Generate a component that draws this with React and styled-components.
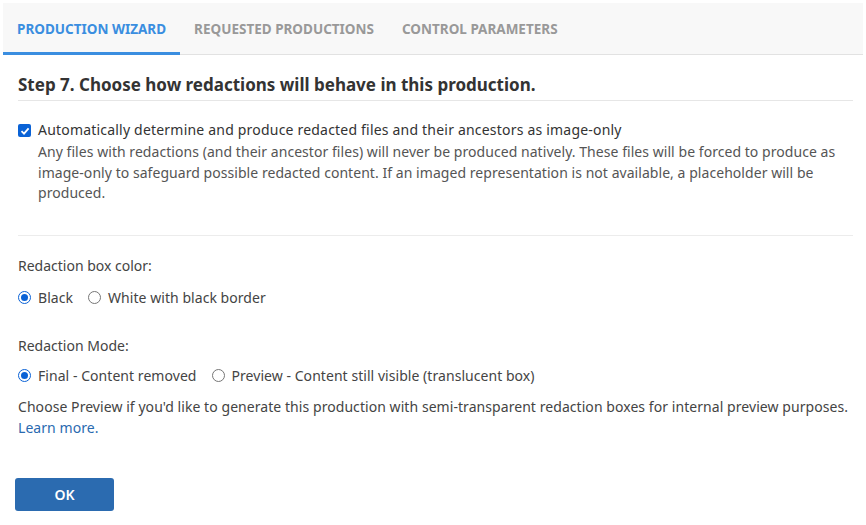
import React, { useState } from "react";
import styled, { createGlobalStyle } from "styled-components";

const GlobalStyle = createGlobalStyle`
    html, body {
        margin: 0;
        padding: 0;
        background: #ffffff;
    }
    body {
        font-family: "Noto Sans", "Open Sans", sans-serif;
        color: #333333;
    }
    * {
        box-sizing: border-box;
    }
`;

const StyledPage = styled.div`
    width: 866px;
    padding: 3px 3px 0 3px;
`;

const StyledTabBar = styled.div`
    display: flex;
    flex-direction: row;
    height: 52px;
    background-color: #f8f8f8;
    border-bottom: solid 1px #e2e2e2;
`;

const StyledTab = styled.div`
    display: flex;
    align-items: center;
    padding: 3px 14px 0 14px;
    margin-bottom: -1px;
    font-size: 13.5px;
    font-weight: 700;
    text-transform: uppercase;
    color: ${(props) => (props.active ? "#3a8ee0" : "#999999")};
    border-bottom: solid 3px ${(props) => (props.active ? "#3a8ee0" : "transparent")};
`;

const StyledBody = styled.div`
    display: flex;
    flex-direction: column;
    padding: 0 10px 0 15px;
`;

const StyledHeading = styled.h2`
    margin: 18px 0 0 0;
    padding-bottom: 4px;
    font-size: 17px;
    font-weight: 700;
    color: #333333;
    border-bottom: solid 1px #e6e6e6;
`;

const StyledCheckRow = styled.label`
    display: flex;
    flex-direction: row;
    align-items: flex-start;
    gap: 7px;
    margin-top: 19px;
`;

const StyledCheckbox = styled.span`
    flex-shrink: 0;
    width: 13px;
    height: 13px;
    margin-top: 4px;
    border-radius: 2px;
    background-color: #0a62d6;
    display: flex;
    align-items: center;
    justify-content: center;
`;

const StyledCheckText = styled.div`
    display: flex;
    flex-direction: column;
`;

const StyledOptionTitle = styled.div`
    font-size: 14px;
    line-height: 20px;
    letter-spacing: 0.2px;
    color: #333333;
    margin-bottom: 2px;
`;

const StyledDescription = styled.div`
    font-size: 14px;
    line-height: 20.5px;
    letter-spacing: 0.05px;
    color: #555555;
`;

const StyledDivider = styled.div`
    height: 1px;
    background-color: #ececec;
    margin: ${(props) => props.margin || "0"};
`;

const StyledLabel = styled.div`
    font-size: 14px;
    line-height: 20px;
    color: #444444;
    margin-top: ${(props) => props.top || "0"};
`;

const StyledRadioGroup = styled.div`
    display: flex;
    flex-direction: row;
    gap: 15px;
    margin-top: ${(props) => props.top || "11px"};
`;

const StyledRadioLabel = styled.label`
    display: flex;
    flex-direction: row;
    align-items: center;
    gap: 7px;
    font-size: 14px;
    line-height: 20px;
    letter-spacing: 0.05px;
    color: #444444;
    cursor: pointer;
`;

const StyledRadio = styled.span`
    width: 13px;
    height: 13px;
    border-radius: 50%;
    border: solid 1px ${(props) => (props.checked ? "#0a62d6" : "#767676")};
    display: flex;
    align-items: center;
    justify-content: center;
    &::after {
        content: "";
        width: 7px;
        height: 7px;
        border-radius: 50%;
        background-color: ${(props) => (props.checked ? "#0a62d6" : "transparent")};
    }
`;

const StyledHint = styled.div`
    font-size: 14px;
    line-height: 21.5px;
    letter-spacing: 0.06px;
    color: #444444;
    margin-top: 10px;
`;

const StyledLink = styled.a`
    color: #2a6ab0;
    text-decoration: none;
`;

const StyledButton = styled.button`
    width: 99px;
    height: 33px;
    margin: 39px 0 0 -3px;
    border: none;
    border-radius: 3px;
    background-color: #2b6bb0;
    color: #ffffff;
    font-family: inherit;
    font-size: 14px;
    font-weight: 600;
    cursor: pointer;
`;

const Radio = ({ checked, label, onSelect }) => (
    <StyledRadioLabel onClick={onSelect}>
        <StyledRadio checked={checked} />
        {label}
    </StyledRadioLabel>
);

const tabs = ["Production Wizard", "Requested Productions", "Control Parameters"];

const App = () => {
    const [boxColor, setBoxColor] = useState("black");
    const [mode, setMode] = useState("final");

    return (
        <StyledPage>
            <GlobalStyle />
            <StyledTabBar>
                {tabs.map((tab, i) => (
                    <StyledTab key={tab} active={i === 0}>
                        {tab}
                    </StyledTab>
                ))}
            </StyledTabBar>
            <StyledBody>
                <StyledHeading>Step 7. Choose how redactions will behave in this production.</StyledHeading>
                <StyledCheckRow>
                    <StyledCheckbox>
                        <svg width="10" height="10" viewBox="0 0 10 10">
                            <path d="M1.5 5.2 L4 7.6 L8.6 2.4" fill="none" stroke="#fff" strokeWidth="1.8" />
                        </svg>
                    </StyledCheckbox>
                    <StyledCheckText>
                        <StyledOptionTitle>
                            Automatically determine and produce redacted files and their ancestors as image-only
                        </StyledOptionTitle>
                        <StyledDescription>
                            Any files with redactions (and their ancestor files) will never be produced natively. These
                            files will be forced to produce as image-only to safeguard possible redacted content. If an
                            imaged representation is not available, a placeholder will be produced.
                        </StyledDescription>
                    </StyledCheckText>
                </StyledCheckRow>
                <StyledDivider margin="31px 0 0 0" />
                <StyledLabel top="20px">Redaction box color:</StyledLabel>
                <StyledRadioGroup top="12px">
                    <Radio checked={boxColor === "black"} label="Black" onSelect={() => setBoxColor("black")} />
                    <Radio
                        checked={boxColor === "white"}
                        label="White with black border"
                        onSelect={() => setBoxColor("white")}
                    />
                </StyledRadioGroup>
                <StyledLabel top="28px">Redaction Mode:</StyledLabel>
                <StyledRadioGroup top="10px">
                    <Radio checked={mode === "final"} label="Final - Content removed" onSelect={() => setMode("final")} />
                    <Radio
                        checked={mode === "preview"}
                        label="Preview - Content still visible (translucent box)"
                        onSelect={() => setMode("preview")}
                    />
                </StyledRadioGroup>
                <StyledHint>
                    Choose Preview if you'd like to generate this production with semi-transparent redaction boxes for
                    internal preview purposes.
                    <br />
                    <StyledLink href="#">Learn more.</StyledLink>
                </StyledHint>
                <div>
                    <StyledButton>OK</StyledButton>
                </div>
            </StyledBody>
        </StyledPage>
    );
};

export default App;
